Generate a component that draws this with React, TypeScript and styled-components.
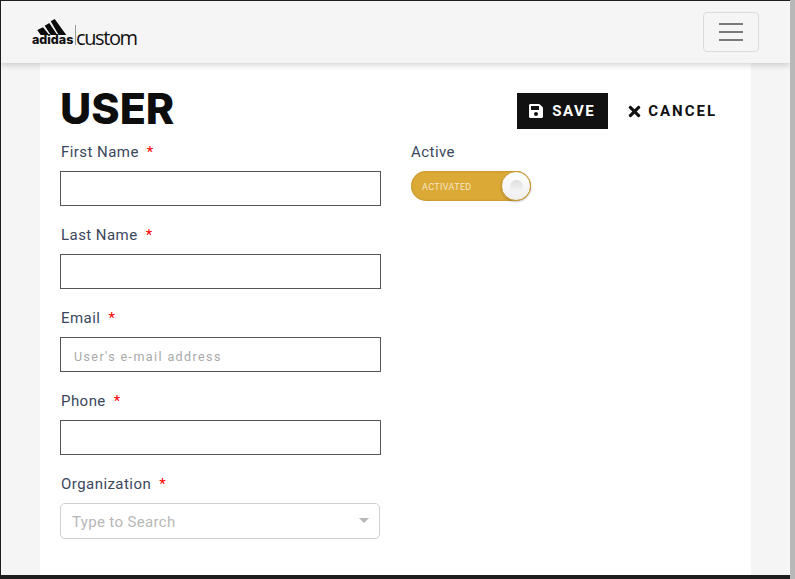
import React from "react";
import styled, { createGlobalStyle } from "styled-components";
import { FaSave, FaTimes } from "react-icons/fa";

const GlobalStyle = createGlobalStyle`
  html, body {
    margin: 0;
    padding: 0;
    height: 100%;
    overflow: hidden;
  }
  * {
    box-sizing: border-box;
  }
`;

const Screen = styled.div`
  width: 795px;
  height: 579px;
  display: flex;
  background-color: #b8b8b8;
  font-family: "Roboto", "Liberation Sans", sans-serif;
`;

const Page = styled.div`
  width: 790px;
  height: 579px;
  display: flex;
  flex-direction: column;
  border-top: 1px solid #1e1e1e;
  border-left: 1px solid #1e1e1e;
  border-bottom: 4px solid #1e1e1e;
  background-color: #f5f5f5;
  overflow: hidden;
`;

const Navbar = styled.header`
  flex: 0 0 62px;
  position: relative;
  z-index: 1;
  display: flex;
  align-items: center;
  justify-content: space-between;
  padding: 0 31px 0 31px;
  background-color: #f5f5f5;
  box-shadow: 0 2px 6px rgba(0, 0, 0, 0.18);
`;

const Logo = styled.div`
  display: flex;
  align-items: flex-end;
  height: 28px;
`;

const Brand = styled.div`
  position: relative;
  width: 42px;
  height: 28px;
`;

const BrandName = styled.span`
  position: absolute;
  left: 0;
  bottom: 0;
  font-family: "Inter", sans-serif;
  font-size: 12.5px;
  line-height: 12px;
  font-weight: 800;
  color: #111;
`;

const BrandDivider = styled.span`
  width: 1px;
  height: 20px;
  margin: 0 0 1px 1px;
  background-color: #999;
`;

const Product = styled.span`
  font-family: "Open Sans", sans-serif;
  font-size: 20px;
  line-height: 20px;
  letter-spacing: -1.4px;
  color: #111;
  margin-bottom: -2px;
`;

const Toggler = styled.button`
  width: 56px;
  height: 40px;
  display: flex;
  flex-direction: column;
  align-items: center;
  justify-content: center;
  gap: 6px;
  padding: 0;
  background: transparent;
  border: 1px solid #dcdcdc;
  border-radius: 4px;
`;

const TogglerLine = styled.span`
  width: 24px;
  height: 2px;
  background-color: #7a7a7a;
`;

const Content = styled.main`
  flex: 1;
  width: 711px;
  margin-left: 39px;
  padding: 29px 34px 0 20px;
  background-color: #fff;
`;

const TitleRow = styled.div`
  display: flex;
  align-items: flex-start;
  justify-content: space-between;
  height: 49px;
`;

const Title = styled.h1`
  margin: 0;
  font-family: "Inter", sans-serif;
  font-size: 43px;
  line-height: 32px;
  font-weight: 800;
  color: #0d0d0d;
`;

const Actions = styled.div`
  display: flex;
  align-items: center;
  gap: 20px;
  margin-top: 1px;
`;

const ActionButton = styled.button<{ $primary?: boolean }>`
  height: 36px;
  display: flex;
  align-items: center;
  gap: ${({ $primary }) => ($primary ? "8px" : "7px")};
  padding: ${({ $primary }) => ($primary ? "0 13px 0 12px" : "0")};
  border: none;
  background-color: ${({ $primary }) => ($primary ? "#111" : "transparent")};
  color: ${({ $primary }) => ($primary ? "#fff" : "#111")};
  font-family: "Roboto", sans-serif;
  font-size: 15px;
  font-weight: 700;
  letter-spacing: ${({ $primary }) => ($primary ? "1.5px" : "2px")};
`;

const SaveIcon = styled(FaSave)`
  margin-left: -1px;
`;

const CancelIcon = styled(FaTimes)`
  margin: 0 -2px;
`;

const FormGrid = styled.div`
  display: flex;
  gap: 30px;
`;

const Column = styled.div`
  width: 321px;
  display: flex;
  flex-direction: column;
  gap: 18px;
`;

const Field = styled.div`
  display: flex;
  flex-direction: column;
`;

const Label = styled.label<{ $flush?: boolean }>`
  height: 30px;
  padding: 2px 0 0 ${({ $flush }) => ($flush ? "0" : "1px")};
  font-size: 15px;
  line-height: 18px;
  letter-spacing: 0.45px;
  color: #3a475c;
`;

const Required = styled.span`
  margin-left: 8px;
  color: #f00;
`;

const TextInput = styled.input`
  width: 321px;
  height: 35px;
  padding: 3px 13px 0;
  border: 1px solid #555;
  border-radius: 0;
  outline: none;
  font-family: "Roboto", sans-serif;
  font-size: 12.5px;
  letter-spacing: 1.4px;
  &::placeholder {
    color: #a8a8a8;
    opacity: 1;
  }
`;

const SelectBox = styled.div`
  width: 320px;
  height: 36px;
  display: flex;
  align-items: center;
  justify-content: space-between;
  padding: 2px 10px 0 11px;
  border: 1px solid #d0d0d0;
  border-radius: 5px;
  font-size: 15px;
  letter-spacing: 0.35px;
  color: #b8b8b8;
`;

const Caret = styled.span`
  width: 0;
  height: 0;
  margin-bottom: 4px;
  border-left: 5px solid transparent;
  border-right: 5px solid transparent;
  border-top: 5px solid #b8b8b8;
`;

const Switch = styled.div`
  width: 120px;
  height: 30px;
  display: flex;
  align-items: center;
  justify-content: space-between;
  padding: 1px 0 0 11px;
  border-radius: 15px;
  background-color: #dba936;
  box-shadow: inset 0 0 2px rgba(120, 85, 0, 0.5);
  font-size: 9px;
  letter-spacing: 0.35px;
  color: #f5e7c6;
`;

const Knob = styled.span`
  width: 30px;
  height: 30px;
  margin-top: -1px;
  display: flex;
  align-items: center;
  justify-content: center;
  border: 1px solid #c79a34;
  border-radius: 50%;
  background: linear-gradient(180deg, #fff 0%, #efefef 100%);
  box-shadow: 0 1px 2px rgba(0, 0, 0, 0.25);
`;

const KnobDot = styled.span`
  width: 13px;
  height: 13px;
  border-radius: 50%;
  background: linear-gradient(180deg, #dedede 0%, #f6f6f6 100%);
`;

const StripesSvg = styled.svg`
  position: absolute;
  top: 0;
  left: 0;
`;

const Stripes = () => (
  <StripesSvg width="42" height="18" viewBox="0 0 42 18">
    <path
      d="M18.7 3.3 L22.7 1 L34.3 17 L26.7 17 Z M12.7 7.7 L17.3 5 L25.3 17 L18.7 17 Z M5.3 12 L11 9.3 L17.3 17 L8.7 17 Z"
      fill="#0b0b0b"
    />
  </StripesSvg>
);

const FIELDS = [
  { label: "First Name" },
  { label: "Last Name" },
  { label: "Email", placeholder: "User's e-mail address" },
  { label: "Phone" },
];

const App = () => (
  <>
    <GlobalStyle />
    <Screen>
      <Page>
        <Navbar>
          <Logo>
            <Brand>
              <Stripes />
              <BrandName>adidas</BrandName>
            </Brand>
            <BrandDivider />
            <Product>custom</Product>
          </Logo>
          <Toggler aria-label="Toggle navigation">
            <TogglerLine />
            <TogglerLine />
            <TogglerLine />
          </Toggler>
        </Navbar>
        <Content>
          <TitleRow>
            <Title>USER</Title>
            <Actions>
              <ActionButton $primary>
                <SaveIcon size={16} />
                SAVE
              </ActionButton>
              <ActionButton>
                <CancelIcon size={17} />
                CANCEL
              </ActionButton>
            </Actions>
          </TitleRow>
          <FormGrid>
            <Column>
              {FIELDS.map((field) => (
                <Field key={field.label}>
                  <Label>
                    {field.label}
                    <Required>*</Required>
                  </Label>
                  <TextInput placeholder={field.placeholder} />
                </Field>
              ))}
              <Field>
                <Label>
                  Organization
                  <Required>*</Required>
                </Label>
                <SelectBox>
                  Type to Search
                  <Caret />
                </SelectBox>
              </Field>
            </Column>
            <Column>
              <Field>
                <Label $flush>Active</Label>
                <Switch>
                  ACTIVATED
                  <Knob>
                    <KnobDot />
                  </Knob>
                </Switch>
              </Field>
            </Column>
          </FormGrid>
        </Content>
      </Page>
    </Screen>
  </>
);

export default App;
